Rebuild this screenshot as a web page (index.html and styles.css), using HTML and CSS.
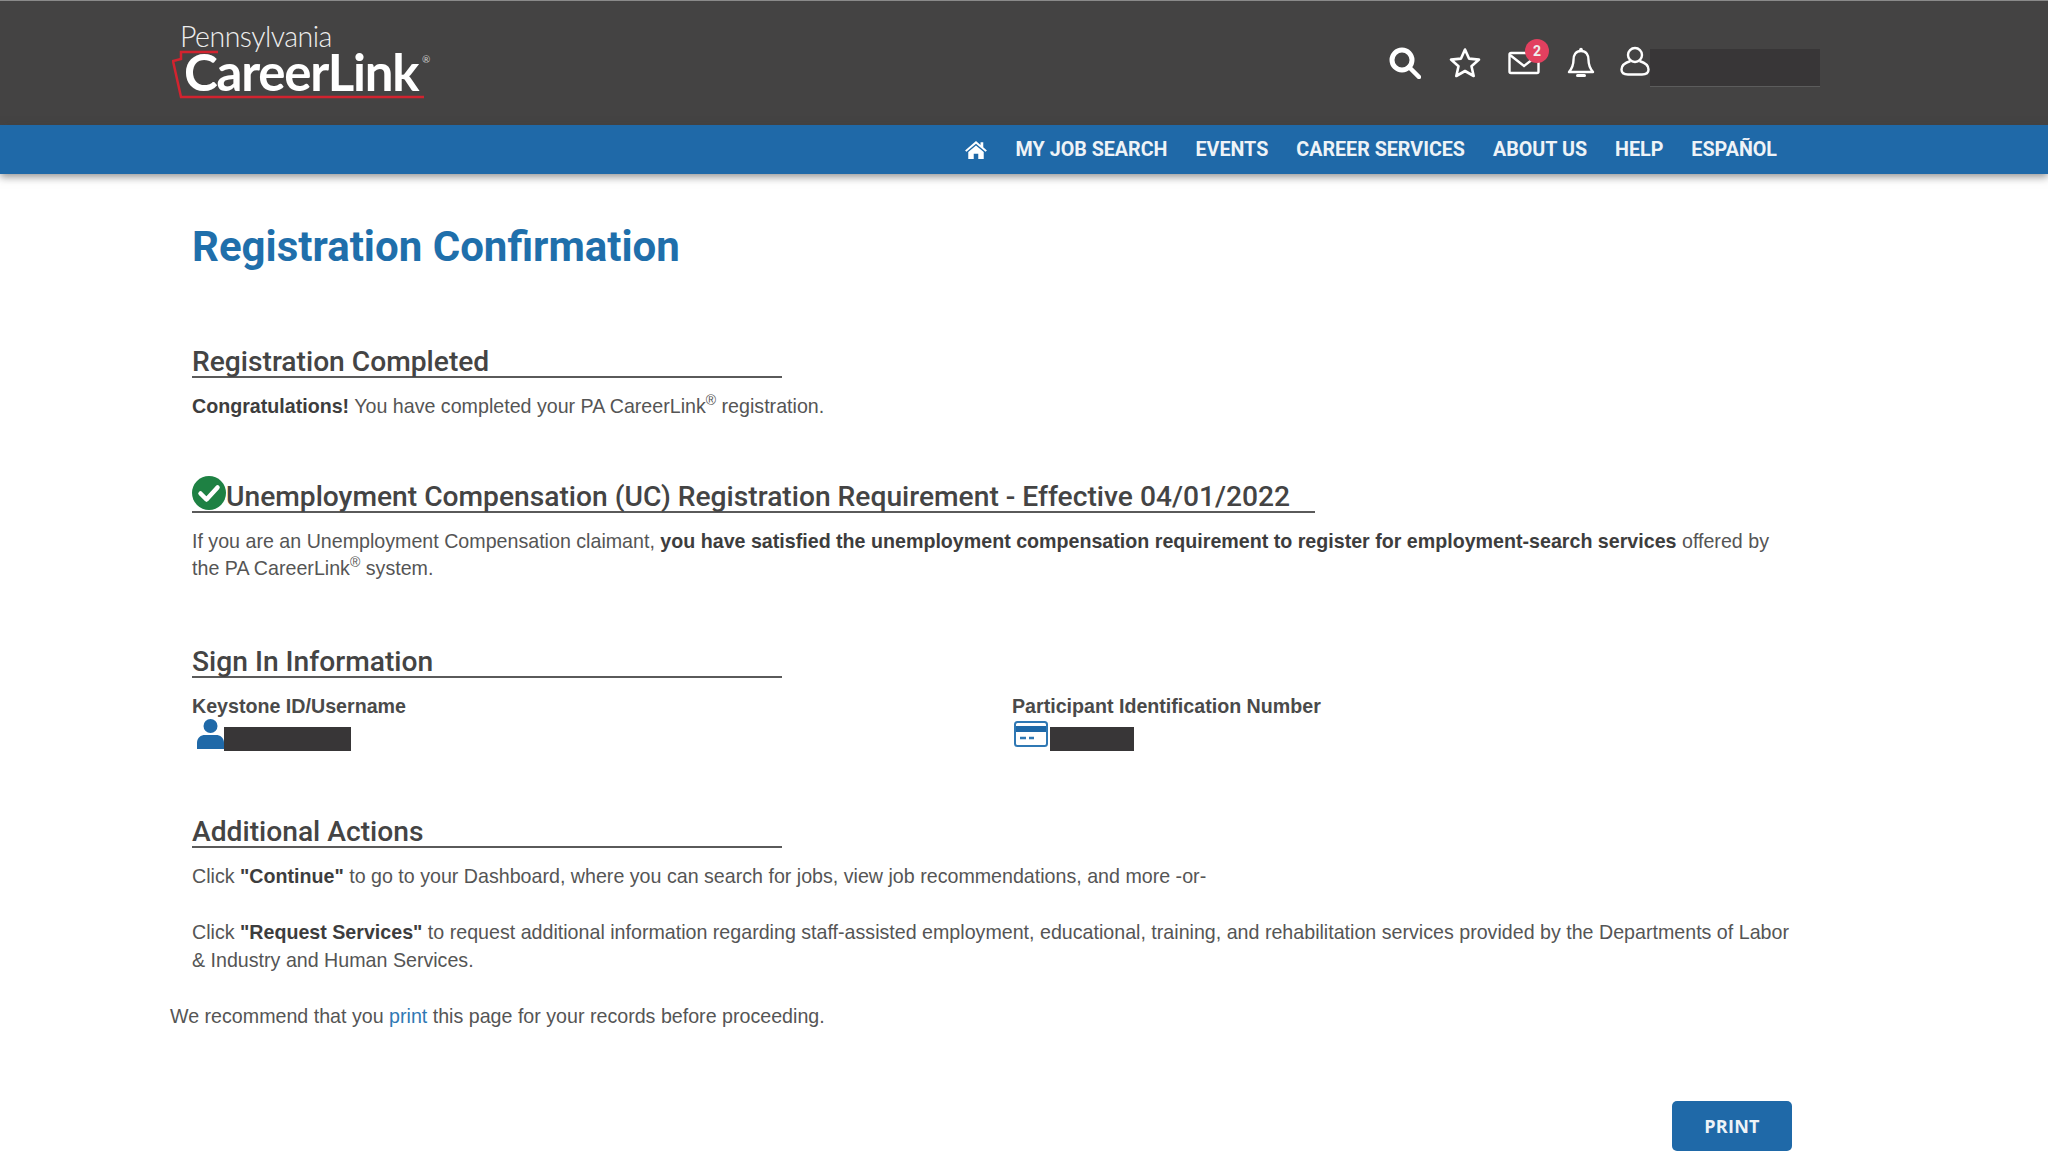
FILE: index.html
```html
<!DOCTYPE html>
<html lang="en">
<head>
<meta charset="utf-8">
<title>Registration Confirmation</title>
<link rel="stylesheet" href="styles.css">
</head>
<body>
<header class="topbar">
  <a class="logo" href="#">
    <svg class="logo-outline" viewBox="0 0 260 52" width="260" height="52" aria-hidden="true"><path d="M46 3H9V10L1 12L9 48H252" fill="none" stroke="#d2232f" stroke-width="2.5"/></svg>
    <span class="logo-state">Pennsylvania</span>
    <span class="logo-name">CareerLink<sup class="logo-reg">®</sup></span>
  </a>
  <div class="tools">
    <svg class="tool tool-search" viewBox="0 0 32 32" aria-hidden="true"><circle cx="13" cy="13" r="10" fill="none" stroke="#fff" stroke-width="5"/><path d="M20 20L30 30" stroke="#fff" stroke-width="4.500" stroke-linecap="round"/></svg>
    <svg class="tool tool-star" viewBox="0 0 32 32" aria-hidden="true"><path d="M16 2.500L20 11.600L30 12.600L22.500 19.200L24.700 29L16 24L7.300 29L9.500 19.200L2 12.600L12 11.600Z" fill="none" stroke="#fff" stroke-width="2.600" stroke-linejoin="round"/></svg>
    <span class="mail">
      <svg class="tool-mail" viewBox="0 0 32 24" aria-hidden="true"><rect x="1.500" y="2" width="29" height="20" rx="1.500" fill="none" stroke="#fff" stroke-width="2.400"/><path d="M2 4L16 15L30 4" fill="none" stroke="#fff" stroke-width="2.400"/></svg>
      <span class="badge">2</span>
    </span>
    <svg class="tool tool-bell" viewBox="0 0 28 32" aria-hidden="true"><path d="M14 4C8.500 4 6.500 8.500 6.500 13C6.500 19 4.500 22 2 25H26C23.500 22 21.500 19 21.500 13C21.500 8.500 19.500 4 14 4Z" fill="none" stroke="#fff" stroke-width="2.400" stroke-linejoin="round"/><circle cx="14" cy="2.500" r="1.800" fill="#fff"/><path d="M10.500 28.500H17.500" stroke="#fff" stroke-width="3" stroke-linecap="round"/></svg>
    <svg class="tool tool-user" viewBox="0 0 30 30" aria-hidden="true"><circle cx="15" cy="9" r="7" fill="none" stroke="#fff" stroke-width="2.400"/><path d="M10.500 15C4 17 1.500 20 1.500 23.500C1.500 27 4 28.500 8 28.500H22C26 28.500 28.500 27 28.500 23.500C28.500 20 26 17 19.500 15" fill="none" stroke="#fff" stroke-width="2.400"/></svg>
    <span class="redact-name"></span>
  </div>
</header>
<nav class="mainnav">
  <a class="nav-home" href="#" aria-label="Home"><svg viewBox="0 0 26 22" width="24" height="20" aria-hidden="true"><path d="M13 1L1 11.500L2.500 13L13 4L23.500 13L25 11.500L21 8V2.500H18V5.500Z" fill="#fff"/><path d="M13 6L4.500 13.300V21H10.500V15H15.500V21H21.500V13.300Z" fill="#fff"/></svg></a>
  <a href="#">MY JOB SEARCH</a>
  <a href="#">EVENTS</a>
  <a href="#">CAREER SERVICES</a>
  <a href="#">ABOUT US</a>
  <a href="#">HELP</a>
  <a href="#">ESPAÑOL</a>
</nav>
<main class="content">
  <h1 class="page-title">Registration Confirmation</h1>

  <section class="block block-completed">
    <h2 class="section-head">Registration Completed</h2>
    <p class="copy"><strong>Congratulations!</strong> You have completed your PA CareerLink<sup>®</sup> registration.</p>
  </section>

  <section class="block block-uc">
    <h2 class="section-head section-head-wide">
      <svg class="check" viewBox="0 0 34 34" aria-hidden="true"><circle cx="17" cy="17" r="17" fill="#1e8143"/><path d="M8.500 17.500L14.500 23.500L25.500 11.500" fill="none" stroke="#fff" stroke-width="4.500" stroke-linecap="round" stroke-linejoin="round"/></svg>
      <span>Unemployment Compensation (UC) Registration Requirement - Effective 04/01/2022</span>
    </h2>
    <p class="copy">If you are an Unemployment Compensation claimant, <strong>you have satisfied the unemployment compensation requirement to register for employment-search services</strong> offered by the PA CareerLink<sup>®</sup> system.</p>
  </section>

  <section class="block block-signin">
    <h2 class="section-head">Sign In Information</h2>
    <div class="signin-grid">
      <div>
        <div class="field-label">Keystone ID/Username</div>
        <div class="field-value">
          <svg class="icon-person" viewBox="0 0 27 30" aria-hidden="true"><circle cx="13.500" cy="7" r="7" fill="#1f69a8"/><path d="M0 30V24C0 18.500 4 16 8 16H19C23 16 27 18.500 27 24V30Z" fill="#1f69a8"/></svg>
          <span class="redact redact-user"></span>
        </div>
      </div>
      <div>
        <div class="field-label">Participant Identification Number</div>
        <div class="field-value">
          <svg class="icon-card" viewBox="0 0 34 26" aria-hidden="true"><rect x="1" y="1" width="32" height="24" rx="2.500" fill="#fff" stroke="#2f78b4" stroke-width="2"/><rect x="2" y="5" width="30" height="6" fill="#1f69a8"/><path d="M6 17H12M15 17H20" stroke="#2f78b4" stroke-width="2.500"/></svg>
          <span class="redact redact-id"></span>
        </div>
      </div>
    </div>
  </section>

  <section class="block block-actions">
    <h2 class="section-head">Additional Actions</h2>
    <p class="copy">Click <strong>"Continue"</strong> to go to your Dashboard, where you can search for jobs, view job recommendations, and more -or-</p>
    <p class="copy copy-spaced">Click <strong>"Request Services"</strong> to request additional information regarding staff-assisted employment, educational, training, and rehabilitation services provided by the Departments of Labor &amp; Industry and Human Services.</p>
  </section>

  <p class="copy recommend">We recommend that you <a href="#">print</a> this page for your records before proceeding.</p>

  <div class="actions"><button class="print-btn" type="button">PRINT</button></div>
</main>
</body>
</html>
```
FILE: styles.css
```css
* { box-sizing: border-box; }
html, body { margin: 0; height: 1151px; overflow: hidden; background: #fff; }
body { font-family: "Liberation Sans", Arial, sans-serif; color: #555; }
a { text-decoration: none; }

.topbar {
  height: 125px;
  background: #444343;
  border-top: 1px solid #8a8a8a;
  display: flex;
  justify-content: space-between;
  padding: 0 228px 0 172px;
}
.logo { position: relative; display: block; width: 270px; height: 110px; color: #fff; }
.logo-outline { position: absolute; left: 0; top: 48px; }
.logo-state {
  position: absolute; left: 8px; top: 20px;
  font-family: Lato, sans-serif; font-weight: 300; font-size: 28.500px; line-height: 30px;
  letter-spacing: -0.5px; color: #eee; white-space: nowrap;
}
.logo-name {
  position: absolute; left: 12px; top: 41px;
  font-family: Lato, sans-serif; font-weight: 700; font-size: 51px; line-height: 60px;
  letter-spacing: -1.200px; white-space: nowrap;
}
.logo-reg { position: absolute; left: 238px; top: 11px; font-size: 10px; line-height: 12px; font-weight: 400; letter-spacing: 0; color: #ccc; }

.tools { display: flex; align-items: flex-start; padding-top: 45px; }
.tool { display: block; flex: none; }
.tool-search { width: 32px; height: 32px; margin: 1px 28px 0 0; }
.tool-star { width: 32px; height: 32px; margin: 1px 27px 0 0; }
.mail { position: relative; width: 32px; height: 24px; margin: 5px 27px 0 0; }
.tool-mail { display: block; width: 32px; height: 24px; }
.badge {
  position: absolute; left: 17px; top: -12px;
  width: 24px; height: 24px; border-radius: 50%;
  background: #e2405f; color: #eee;
  font: 700 14px/24px Roboto, sans-serif; text-align: center;
}
.tool-bell { width: 28px; height: 32px; margin: 1px 25px 0 0; }
.tool-user { width: 30px; height: 30px; }
.redact-name { width: 170px; height: 38px; margin-top: 3px; background: #383637; border-bottom: 1px solid #5c5c5c; }

.mainnav {
  height: 49px;
  background: #1f69a8;
  box-shadow: 0 3px 8px rgba(60, 60, 60, 0.55);
  display: flex;
  align-items: center;
  justify-content: flex-end;
  gap: 28px;
  padding-right: 271px;
  position: relative;
}
.mainnav a {
  color: #eef3f7;
  font-family: Roboto, sans-serif;
  font-weight: 700;
  font-size: 19.700px;
  white-space: nowrap;
}
.nav-home { display: flex; }

.content { padding: 0 256px 0 170px; }
.page-title {
  margin: 48px 0 0 22px;
  font-family: Roboto, sans-serif; font-weight: 700; font-size: 42px; line-height: 50px;
  color: #1f6fab;
}
.block { padding-left: 22px; }
.block-completed { margin-top: 73px; }
.block-uc { margin-top: 56px; }
.block-signin { margin-top: 62px; }
.block-actions { margin-top: 64px; }

.section-head {
  width: 590px;
  margin: 0;
  padding-top: 3px;
  border-bottom: 2px solid #5a5a5a;
  font-family: Roboto, sans-serif; font-weight: 500; font-size: 28.200px; line-height: 28px;
  color: #444;
}
.section-head-wide { width: 1123px; display: flex; align-items: flex-end; height: 36px; padding-top: 0; line-height: 29px; }
.check { width: 34px; height: 34px; flex: none; margin-bottom: 1px; }

.copy { margin: 15px 0 0; font-size: 19.650px; line-height: 27.500px; color: #555; }
.copy strong { color: #3d3d3d; }
.copy sup { font-size: 14px; line-height: 0; }
.copy a { color: #2f78b4; }
.copy-spaced { margin-top: 29px; }
.recommend { margin-top: 28.500px; }

.signin-grid { display: grid; grid-template-columns: 820px 1fr; margin-top: 15.500px; }
.field-label { font-weight: 700; font-size: 19.650px; line-height: 27px; color: #4a4a4a; }
.field-value { display: flex; align-items: flex-end; height: 30.500px; }
.icon-person { width: 27px; height: 30px; margin: 0 0 2px 5px; }
.icon-card { width: 34px; height: 26px; margin: 0 2px 4px 2px; }
.redact { display: block; height: 24px; background: #383637; }
.redact-user { width: 127px; }
.redact-id { width: 84px; }

.actions { display: flex; justify-content: flex-end; margin-top: 71px; }
.print-btn {
  width: 120px; height: 50px;
  border: 0; border-radius: 5px;
  background: #1f69a8; color: #eef3f7;
  font-family: "Open Sans", sans-serif; font-weight: 700; font-size: 18px; letter-spacing: 0.3px;
}
```
